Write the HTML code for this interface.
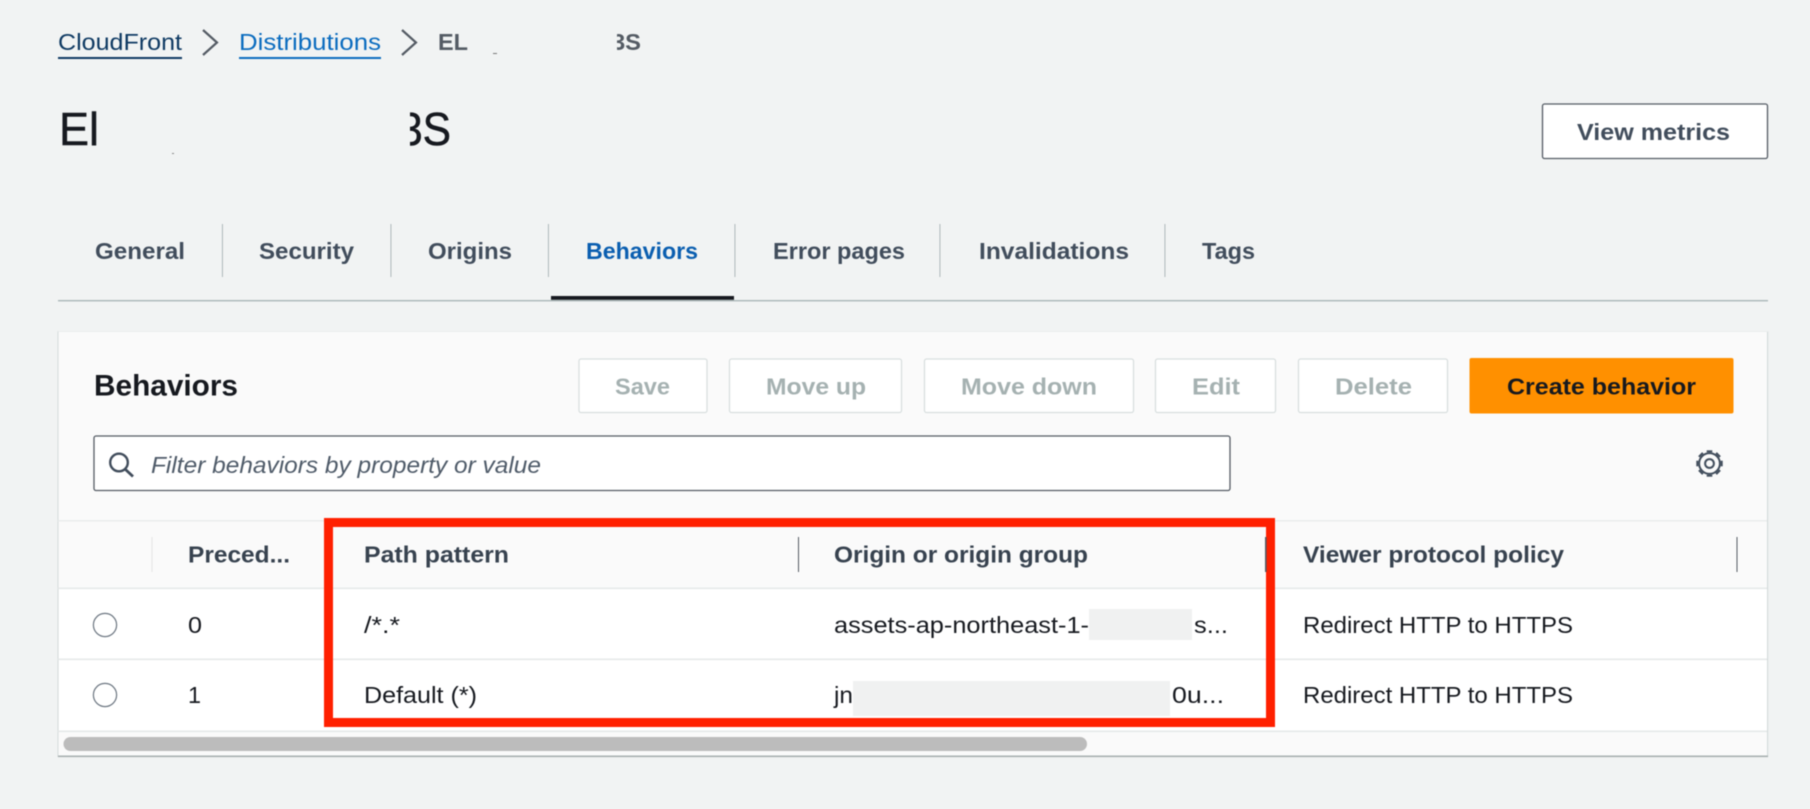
<!DOCTYPE html>
<html lang="en">
<head>
<meta charset="utf-8">
<title>CloudFront Behaviors</title>
<style>
html,body{margin:0;padding:0;background:#f1f3f3;width:1810px;height:809px;overflow:hidden}
svg{display:block;filter:blur(.4px)}
text{font-family:"Liberation Sans",sans-serif;font-size:23px;fill:#16191f}
.b{font-weight:700}
.t{font-weight:700;fill:#414d5c}
.d{font-weight:700;fill:#a5b1b1}
.h{font-weight:700;fill:#37424f}
.btn{fill:#fff;stroke:#d9dfdf;stroke-width:1.3}
</style>
</head>
<body>
<svg width="1810" height="809" viewBox="0 0 1810 809" xmlns="http://www.w3.org/2000/svg">
<rect width="1810" height="809" fill="#f1f3f3"/>

<!-- breadcrumb -->
<text x="58" y="50" textLength="124" lengthAdjust="spacingAndGlyphs" style="fill:#0f3a63">CloudFront</text>
<rect x="58" y="57" width="124" height="2" fill="#0f3a63"/>
<path d="M203 30L217 42.5L203 55" fill="none" stroke="#545b64" stroke-width="2.2"/>
<text x="239" y="50" textLength="142" lengthAdjust="spacingAndGlyphs" style="fill:#0b6cbf">Distributions</text>
<rect x="239" y="57" width="142" height="2" fill="#0b6cbf"/>
<path d="M402 30L416 42.5L402 55" fill="none" stroke="#545b64" stroke-width="2.2"/>
<text class="t" x="438" y="50" textLength="30" lengthAdjust="spacingAndGlyphs" style="fill:#545b64">EL</text>
<rect x="493" y="53" width="4" height="1" fill="#777"/>
<text class="t" x="612" y="50" textLength="29" lengthAdjust="spacingAndGlyphs" style="fill:#545b64">3S</text>
<rect x="600" y="30" width="17" height="26" fill="#f1f3f3"/>

<!-- title -->
<text x="59" y="145" textLength="40" lengthAdjust="spacingAndGlyphs" style="font-size:46px;fill:#16191f;stroke:#16191f;stroke-width:.5">El</text>
<rect x="172" y="153" width="2" height="1" fill="#888"/>
<text x="399" y="145" textLength="52" lengthAdjust="spacingAndGlyphs" style="font-size:46px;fill:#16191f;stroke:#16191f;stroke-width:.5">3S</text>
<rect x="390" y="105" width="20" height="45" fill="#f1f3f3"/>

<!-- view metrics -->
<rect x="1542.5" y="104" width="225" height="54.5" rx="2" fill="#fff" stroke="#545b64" stroke-width="1.3"/>
<text class="t" x="1577" y="140" textLength="153" lengthAdjust="spacingAndGlyphs">View metrics</text>

<!-- tabs -->
<text class="t" x="95" y="259" textLength="90" lengthAdjust="spacingAndGlyphs">General</text>
<text class="t" x="259" y="259" textLength="95" lengthAdjust="spacingAndGlyphs">Security</text>
<text class="t" x="428" y="259" textLength="84" lengthAdjust="spacingAndGlyphs">Origins</text>
<text class="t" x="586" y="259" textLength="112" lengthAdjust="spacingAndGlyphs" style="fill:#0a5eb0">Behaviors</text>
<text class="t" x="773" y="259" textLength="132" lengthAdjust="spacingAndGlyphs">Error pages</text>
<text class="t" x="979" y="259" textLength="150" lengthAdjust="spacingAndGlyphs">Invalidations</text>
<text class="t" x="1202" y="259" textLength="53" lengthAdjust="spacingAndGlyphs">Tags</text>
<g fill="#9fabad">
<rect x="222" y="224" width=".8" height="53"/><rect x="390.5" y="224" width=".8" height="53"/>
<rect x="548" y="224" width=".8" height="53"/><rect x="734.5" y="224" width=".8" height="53"/>
<rect x="939.5" y="224" width=".8" height="53"/><rect x="1164.5" y="224" width=".8" height="53"/>
</g>
<rect x="58" y="300" width="1710" height="1.4" fill="#aab7b8"/>
<rect x="551" y="296" width="183" height="3.8" fill="#16191f"/>

<!-- panel -->
<rect x="58" y="331" width="1710" height="426" fill="#fafafa"/>
<rect x="57.5" y="331" width="1" height="426" fill="#d5dbdb"/>
<rect x="1767" y="331" width="1.2" height="426" fill="#d5dbdb"/>
<rect x="58" y="331" width="1710" height="1" fill="#eaeded"/>
<rect x="58" y="755.5" width="1710" height="1.6" fill="#a8b0b0"/>

<text x="94" y="395.5" textLength="144" lengthAdjust="spacingAndGlyphs" class="b" style="font-size:30px;fill:#16191f">Behaviors</text>

<!-- action buttons -->
<rect class="btn" x="579" y="359" width="128" height="53.5" rx="2"/>
<rect class="btn" x="729.5" y="359" width="172" height="53.5" rx="2"/>
<rect class="btn" x="924.5" y="359" width="209" height="53.5" rx="2"/>
<rect class="btn" x="1155.5" y="359" width="120" height="53.5" rx="2"/>
<rect class="btn" x="1298.5" y="359" width="149" height="53.5" rx="2"/>
<rect x="1469.5" y="358" width="264" height="55.5" rx="2" fill="#ff9000"/>
<text class="d" x="615" y="394.5" textLength="55" lengthAdjust="spacingAndGlyphs">Save</text>
<text class="d" x="766" y="394.5" textLength="100" lengthAdjust="spacingAndGlyphs">Move up</text>
<text class="d" x="961" y="394.5" textLength="136" lengthAdjust="spacingAndGlyphs">Move down</text>
<text class="d" x="1192" y="394.5" textLength="48" lengthAdjust="spacingAndGlyphs">Edit</text>
<text class="d" x="1335" y="394.5" textLength="77" lengthAdjust="spacingAndGlyphs">Delete</text>
<text class="b" x="1507" y="394.5" textLength="189" lengthAdjust="spacingAndGlyphs" style="fill:#16191f">Create behavior</text>

<!-- filter -->
<rect x="94" y="436" width="1136" height="54.5" rx="2" fill="#fff" stroke="#545b64" stroke-width="1.3"/>
<circle cx="119" cy="462.5" r="8.8" fill="none" stroke="#414d5c" stroke-width="2.4"/>
<path d="M125.5 469.5L133 476.5" stroke="#414d5c" stroke-width="2.8" fill="none"/>
<text x="151" y="473" textLength="390" lengthAdjust="spacingAndGlyphs" style="font-style:italic;fill:#4f5b69">Filter behaviors by property or value</text>

<!-- gear -->
<g transform="translate(1709.5 463.5)" fill="none" stroke="#414d5c" stroke-width="2">
<circle r="10.4"/><circle r="4.4"/>
<path d="M-2.8 -12.2H2.8"/>
<path d="M-2.8 -12.2H2.8" transform="rotate(45)"/>
<path d="M-2.8 -12.2H2.8" transform="rotate(90)"/>
<path d="M-2.8 -12.2H2.8" transform="rotate(135)"/>
<path d="M-2.8 -12.2H2.8" transform="rotate(180)"/>
<path d="M-2.8 -12.2H2.8" transform="rotate(225)"/>
<path d="M-2.8 -12.2H2.8" transform="rotate(270)"/>
<path d="M-2.8 -12.2H2.8" transform="rotate(315)"/>
</g>

<!-- table -->
<rect x="58" y="520" width="1709" height="1.6" fill="#eaeded"/>
<rect x="59" y="589" width="1708" height="142" fill="#fff"/>
<rect x="58" y="587.5" width="1709" height="1.6" fill="#e6e9e9"/>
<rect x="58" y="658.5" width="1709" height="1.6" fill="#e6e9e9"/>
<rect x="58" y="730.5" width="1709" height="1.6" fill="#e6e9e9"/>

<rect x="151.5" y="537" width="1" height="35" fill="#e3e6e6"/>
<rect x="798" y="537" width="1" height="35" fill="#545b64"/>
<rect x="1736.5" y="537" width="1" height="35" fill="#545b64"/>

<text class="h" x="188" y="562.5" textLength="102" lengthAdjust="spacingAndGlyphs">Preced...</text>
<text class="h" x="364" y="562.5" textLength="145" lengthAdjust="spacingAndGlyphs">Path pattern</text>
<text class="h" x="834" y="562.5" textLength="254" lengthAdjust="spacingAndGlyphs">Origin or origin group</text>
<text class="h" x="1303" y="562.5" textLength="261" lengthAdjust="spacingAndGlyphs">Viewer protocol policy</text>

<circle cx="105" cy="625" r="11.6" fill="#fff" stroke="#6b7580" stroke-width="1.2"/>
<circle cx="105" cy="695" r="11.6" fill="#fff" stroke="#6b7580" stroke-width="1.2"/>

<text x="188" y="633" textLength="14" lengthAdjust="spacingAndGlyphs">0</text>
<text x="188" y="703" textLength="13" lengthAdjust="spacingAndGlyphs">1</text>
<text x="364" y="633" textLength="36" lengthAdjust="spacingAndGlyphs">/*.*</text>
<text x="364" y="703" textLength="113" lengthAdjust="spacingAndGlyphs">Default (*)</text>

<text x="834" y="633" textLength="255" lengthAdjust="spacingAndGlyphs">assets-ap-northeast-1-</text>
<rect x="1089" y="609" width="103" height="31" fill="#f0f1f1"/>
<text x="1194" y="633" textLength="34" lengthAdjust="spacingAndGlyphs">s...</text>
<text x="834" y="703" textLength="19" lengthAdjust="spacingAndGlyphs">jn</text>
<rect x="853" y="681" width="317" height="35" fill="#f0f1f1"/>
<text x="1172" y="703" textLength="52" lengthAdjust="spacingAndGlyphs">0u...</text>

<text x="1303" y="633" textLength="270" lengthAdjust="spacingAndGlyphs">Redirect HTTP to HTTPS</text>
<text x="1303" y="703" textLength="270" lengthAdjust="spacingAndGlyphs">Redirect HTTP to HTTPS</text>

<!-- scrollbar -->
<rect x="63.5" y="737" width="1023.5" height="14" rx="7" fill="#bcbcbc"/>

<!-- red highlight -->
<rect x="328.5" y="522.5" width="942" height="200" fill="none" stroke="#ff2000" stroke-width="9"/>
<rect x="1265" y="537" width="1.6" height="35" fill="#545b64"/>
</svg>
</body>
</html>
